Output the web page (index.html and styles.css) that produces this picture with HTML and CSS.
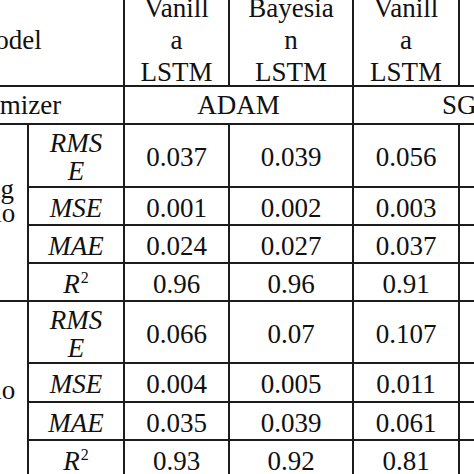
FILE: index.html
```html
<!DOCTYPE html>
<html>
<head>
<meta charset="utf-8">
<link rel="stylesheet" href="styles.css">
</head>
<body>
<div class="table">
  <div class="cell head span2">Model</div>
  <div class="cell head three">Vanill<br>a<br>LSTM</div>
  <div class="cell head three">Bayesia<br>n<br>LSTM</div>
  <div class="cell head three">Vanill<br>a<br>LSTM</div>
  <div class="cell head three">Bayesia<br>n<br>LSTM</div>

  <div class="cell head span2">Optimizer</div>
  <div class="cell head span2">ADAM</div>
  <div class="cell head span2">SGD</div>

  <div class="cell group g1">Training<br>Scenario<br>A</div>
  <div class="cell metric two"><i>RMS<br>E</i></div>
  <div class="cell val">0.037</div>
  <div class="cell val">0.039</div>
  <div class="cell val">0.056</div>
  <div class="cell val">0.048</div>

  <div class="cell metric"><i>MSE</i></div>
  <div class="cell val">0.001</div>
  <div class="cell val">0.002</div>
  <div class="cell val">0.003</div>
  <div class="cell val">0.002</div>

  <div class="cell metric"><i>MAE</i></div>
  <div class="cell val">0.024</div>
  <div class="cell val">0.027</div>
  <div class="cell val">0.037</div>
  <div class="cell val">0.031</div>

  <div class="cell metric"><span><i>R</i><sup>2</sup></span></div>
  <div class="cell val">0.96</div>
  <div class="cell val">0.96</div>
  <div class="cell val">0.91</div>
  <div class="cell val">0.94</div>

  <div class="cell group g2">Test<br>Scenario<br>B</div>
  <div class="cell metric two"><i>RMS<br>E</i></div>
  <div class="cell val">0.066</div>
  <div class="cell val">0.07</div>
  <div class="cell val">0.107</div>
  <div class="cell val">0.089</div>

  <div class="cell metric"><i>MSE</i></div>
  <div class="cell val">0.004</div>
  <div class="cell val">0.005</div>
  <div class="cell val">0.011</div>
  <div class="cell val">0.008</div>

  <div class="cell metric"><i>MAE</i></div>
  <div class="cell val">0.035</div>
  <div class="cell val">0.039</div>
  <div class="cell val">0.061</div>
  <div class="cell val">0.052</div>

  <div class="cell metric"><span><i>R</i><sup>2</sup></span></div>
  <div class="cell val">0.93</div>
  <div class="cell val">0.92</div>
  <div class="cell val">0.81</div>
  <div class="cell val">0.87</div>
</div>
</body>
</html>
```
FILE: styles.css
```css
html, body {
  margin: 0;
  padding: 0;
  background: #ffffff;
  overflow: hidden;
}

.table {
  display: grid;
  width: max-content;
  margin-left: -110px;
  margin-top: -5px;
  grid-template-columns: 137px 94px 103px 122px 104px 124px;
  grid-template-rows: 90px 36px 61px 36px 36px 36px 60px 37px 36px 36px;
  gap: 2px;
  background: #1c1c1c;
  font-family: "Liberation Serif", "Times New Roman", serif;
  font-size: 27px;
  color: #111111;
}

.cell {
  background: #ffffff;
  display: flex;
  align-items: center;
  justify-content: center;
  text-align: center;
  line-height: 28px;
  white-space: nowrap;
}

.head {
  line-height: 32px;
}

.span2 {
  grid-column: span 2;
}

.metric,
.val {
  padding-top: 3px;
  box-sizing: border-box;
}

.group {
  grid-row: span 4;
  line-height: 24px;
  padding-left: 19px;
  box-sizing: border-box;
}

.g1 {
  grid-column: 1;
  grid-row: 3 / span 4;
}

.g2 {
  grid-column: 1;
  grid-row: 7 / span 4;
}

sup {
  font-size: 16px;
  line-height: 0;
  vertical-align: 10px;
  margin-left: 1px;
}
```
